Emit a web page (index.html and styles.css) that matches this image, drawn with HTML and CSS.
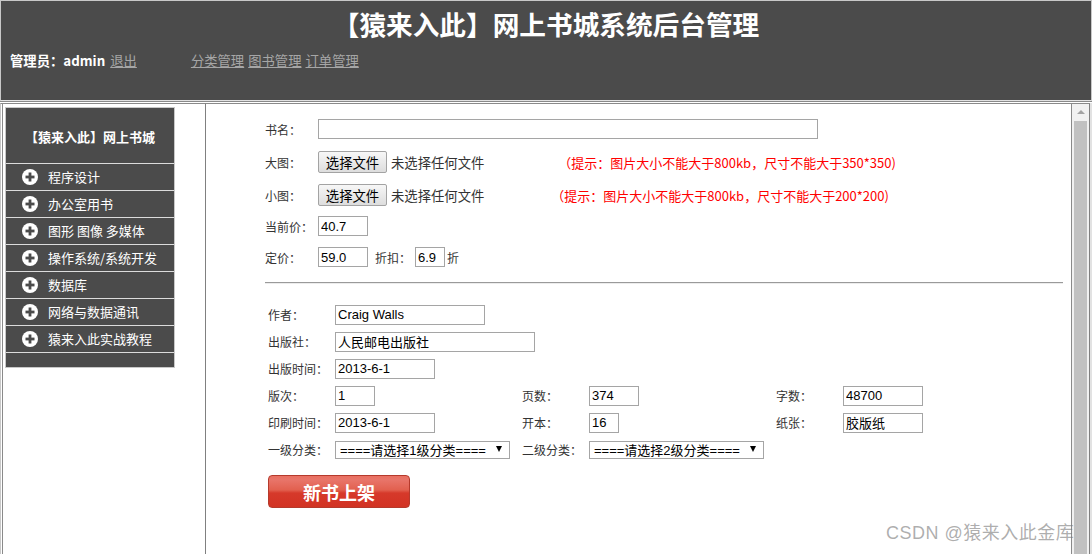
FILE: index.html
```html
<!DOCTYPE html>
<html lang="zh-CN">
<head>
<meta charset="utf-8">
<title>网上书城系统后台管理</title>
<link rel="stylesheet" href="styles.css">
</head>
<body>
<header class="top">
  <h1 class="title">【猿来入此】网上书城系统后台管理</h1>
  <div class="userbar">
    <span class="admin">管理员：admin</span><a class="logout" href="#">退出</a>
    <nav class="nav"><a href="#">分类管理</a><a href="#">图书管理</a><a href="#">订单管理</a></nav>
  </div>
</header>
<div class="frames">
  <aside class="left-frame">
    <div class="menu">
      <div class="menu-head">【猿来入此】网上书城</div>
      <div class="menu-item"><svg class="plus" viewBox="0 0 16 16"><circle cx="8" cy="8" r="8" fill="#fff"/><rect x="3.5" y="6.6" width="9" height="2.8" fill="#4b4b4b"/><rect x="6.6" y="3.5" width="2.8" height="9" fill="#4b4b4b"/></svg><span>程序设计</span></div>
      <div class="menu-item"><svg class="plus" viewBox="0 0 16 16"><circle cx="8" cy="8" r="8" fill="#fff"/><rect x="3.5" y="6.6" width="9" height="2.8" fill="#4b4b4b"/><rect x="6.6" y="3.5" width="2.8" height="9" fill="#4b4b4b"/></svg><span>办公室用书</span></div>
      <div class="menu-item"><svg class="plus" viewBox="0 0 16 16"><circle cx="8" cy="8" r="8" fill="#fff"/><rect x="3.5" y="6.6" width="9" height="2.8" fill="#4b4b4b"/><rect x="6.6" y="3.5" width="2.8" height="9" fill="#4b4b4b"/></svg><span>图形 图像 多媒体</span></div>
      <div class="menu-item"><svg class="plus" viewBox="0 0 16 16"><circle cx="8" cy="8" r="8" fill="#fff"/><rect x="3.5" y="6.6" width="9" height="2.8" fill="#4b4b4b"/><rect x="6.6" y="3.5" width="2.8" height="9" fill="#4b4b4b"/></svg><span>操作系统/系统开发</span></div>
      <div class="menu-item"><svg class="plus" viewBox="0 0 16 16"><circle cx="8" cy="8" r="8" fill="#fff"/><rect x="3.5" y="6.6" width="9" height="2.8" fill="#4b4b4b"/><rect x="6.6" y="3.5" width="2.8" height="9" fill="#4b4b4b"/></svg><span>数据库</span></div>
      <div class="menu-item"><svg class="plus" viewBox="0 0 16 16"><circle cx="8" cy="8" r="8" fill="#fff"/><rect x="3.5" y="6.6" width="9" height="2.8" fill="#4b4b4b"/><rect x="6.6" y="3.5" width="2.8" height="9" fill="#4b4b4b"/></svg><span>网络与数据通讯</span></div>
      <div class="menu-item"><svg class="plus" viewBox="0 0 16 16"><circle cx="8" cy="8" r="8" fill="#fff"/><rect x="3.5" y="6.6" width="9" height="2.8" fill="#4b4b4b"/><rect x="6.6" y="3.5" width="2.8" height="9" fill="#4b4b4b"/></svg><span>猿来入此实战教程</span></div>
      <div class="menu-foot"></div>
    </div>
  </aside>
  <section class="right-frame">
    <main class="main">
      <div class="row h30"><span class="lbl">书名：</span><input class="inp w500" value=""></div>
      <div class="row h36"><span class="lbl">大图：</span><button class="filebtn">选择文件</button><span class="filetext">未选择任何文件</span><span class="hint hint-big">（提示：图片大小不能大于800kb，尺寸不能大于350*350)</span></div>
      <div class="row h30"><span class="lbl">小图：</span><button class="filebtn">选择文件</button><span class="filetext">未选择任何文件</span><span class="hint hint-small">（提示：图片大小不能大于800kb，尺寸不能大于200*200)</span></div>
      <div class="row h32"><span class="lbl">当前价：</span><input class="inp w50" value="40.7"></div>
      <div class="row h30"><span class="lbl">定价：</span><input class="inp w50" value="59.0"><span class="lbl-inline">折扣：</span><input class="inp w30" value="6.9"><span class="unit">折</span></div>
      <hr class="divider">
      <div class="table2">
        <div class="row2"><span class="c-l">作者：</span><span class="c-f"><input class="inp w150" value="Craig Walls"></span></div>
        <div class="row2"><span class="c-l">出版社：</span><span class="c-f"><input class="inp w200" value="人民邮电出版社"></span></div>
        <div class="row2"><span class="c-l">出版时间：</span><span class="c-f"><input class="inp w100" value="2013-6-1"></span></div>
        <div class="row2"><span class="c-l">版次：</span><span class="c-f"><input class="inp w40" value="1"></span><span class="c-l">页数：</span><span class="c-f"><input class="inp w50" value="374"></span><span class="c-l">字数：</span><span class="c-f"><input class="inp w80" value="48700"></span></div>
        <div class="row2"><span class="c-l">印刷时间：</span><span class="c-f"><input class="inp w100" value="2013-6-1"></span><span class="c-l">开本：</span><span class="c-f"><input class="inp w30" value="16"></span><span class="c-l">纸张：</span><span class="c-f"><input class="inp w80" value="胶版纸"></span></div>
        <div class="row2"><span class="c-l">一级分类：</span><span class="c-f"><span class="select"><span>====请选择1级分类====</span><span class="caret"></span></span></span><span class="c-l">二级分类：</span><span class="c-f"><span class="select"><span>====请选择2级分类====</span><span class="caret"></span></span></span></div>
      </div>
      <button class="submit">新书上架</button>
    </main>
    <div class="scrollbar"><div class="arrow-up"></div><div class="thumb"></div></div>
  </section>
</div>
<div class="watermark">CSDN @猿来入此金库</div>
</body>
</html>
```
FILE: styles.css
```css
html, body { margin: 0; padding: 0; }
body {
  width: 1092px;
  height: 554px;
  overflow: hidden;
  background: #fff;
  font-family: "Noto Sans CJK SC", sans-serif;
  display: flex;
  flex-direction: column;
  position: relative;
}

/* top frame */
.top {
  flex: none;
  height: 101px;
  box-sizing: border-box;
  background: #4b4b4b;
  border: 1px solid #c8c8c8;
  border-bottom-color: #e2e2e2;
}
.title {
  margin: 5px 0 0;
  font-size: 26.67px;
  line-height: 36px;
  font-weight: bold;
  color: #fff;
  text-align: center;
}
.userbar {
  margin-top: 9px;
  padding-left: 9px;
  font-size: 13.33px;
  line-height: 20px;
  color: #fff;
  display: flex;
}
.admin { font-weight: bold; }
.logout { margin-left: 5px; color: #a6a6a6; }
.nav { margin-left: 54px; display: flex; gap: 4px; }
.nav a { color: #a6a6a6; }

/* frames */
.frames {
  flex: 1;
  min-height: 0;
  display: flex;
  border-top: 1px solid #8a8a8a;
  padding-top: 1px;
}
.left-frame {
  flex: none;
  width: 205px;
  box-sizing: border-box;
  border-top: 1px solid #8a8a8a;
  border-left: 1px solid #c8c8c8;
  box-shadow: inset 1px 0 #fff, inset 2px 0 #8a8a8a;
  padding: 3px 0 0 4px;
}
.menu {
  width: 170px;
  box-sizing: border-box;
  background: #4b4b4b;
  border: 1px solid #c8c8c8;
  color: #fff;
  font-size: 13px;
}
.menu-head {
  height: 55px;
  box-sizing: border-box;
  padding-top: 2px;
  line-height: 53px;
  text-align: center;
  font-weight: bold;
}
.menu-item {
  height: 27px;
  box-sizing: border-box;
  border-top: 1px solid #dcdcdc;
  padding-bottom: 1px;
  display: flex;
  align-items: center;
  padding-left: 16px;
}
.plus { width: 16px; height: 16px; margin-right: 10px; flex: none; }
.menu-foot { height: 15px; box-sizing: border-box; border-top: 1px solid #dcdcdc; }

.right-frame {
  flex: none;
  width: 885px;
  box-sizing: border-box;
  display: flex;
  border-top: 1px solid #8a8a8a;
  border-left: 1px solid #808080;
  border-right: 1px solid #808080;
  box-shadow: 2px 0 0 #e2e2e2;
}
.main {
  flex: 1;
  box-sizing: border-box;
  padding: 10px 8px 0 59px;
  font-size: 12px;
  color: #333;
}
.row { display: flex; align-items: center; }
.h30 { height: 30px; }
.h32 { height: 32px; }
.h36 { height: 36px; }
.lbl { width: 53px; flex: none; }

.inp {
  flex: none;
  box-sizing: border-box;
  height: 20px;
  margin: 0;
  border: 1px solid #a5a5a5;
  padding: 0 2px;
  font: 13px "Liberation Sans", "Noto Sans CJK SC", sans-serif;
  color: #000;
  background: #fff;
  outline: none;
}
.w30 { width: 30px; }
.w40 { width: 40px; }
.w50 { width: 50px; }
.w80 { width: 80px; }
.w100 { width: 100px; }
.w150 { width: 150px; }
.w200 { width: 200px; }
.w500 { width: 500px; }

.filebtn {
  width: 69px;
  height: 22px;
  padding: 0;
  margin: 0;
  border: 1px solid #a3a3a3;
  border-radius: 2px;
  background: linear-gradient(#f7f7f7, #dddddd);
  font: 13.33px "Noto Sans CJK SC", sans-serif;
  color: #000;
}
.filetext { margin-left: 4px; font-size: 13.33px; color: #333; }
.hint { color: #f00; font-size: 13px; white-space: nowrap; }
.hint-big { margin-left: 74px; }
.hint-small { margin-left: 67px; }
.lbl-inline { margin-left: 7px; margin-right: 4px; }
.unit { margin-left: 2px; }

.divider {
  margin: 10px 0 0 0;
  height: 0;
  border: 0;
  border-top: 1px solid #9a9a9a;
  border-bottom: 1px solid #ececec;
}

.table2 { margin: 17px 0 0 3px; }
.row2 { display: flex; align-items: center; height: 27px; }
.c-l { width: 67px; flex: none; }
.c-f { min-width: 187px; flex: none; display: flex; }
.select {
  box-sizing: border-box;
  width: 175px;
  height: 18px;
  border: 1px solid #a5a5a5;
  background: #fff;
  display: flex;
  align-items: center;
  justify-content: space-between;
  padding: 0 7px 0 4px;
  font: 13px "Liberation Sans", "Noto Sans CJK SC", sans-serif;
  color: #000;
  white-space: nowrap;
}
.caret {
  width: 0;
  height: 0;
  border-left: 3px solid transparent;
  border-right: 3px solid transparent;
  border-top: 6px solid #000;
  align-self: flex-start;
  margin-top: 4px;
}

.submit {
  display: block;
  margin: 12px 0 0 3px;
  width: 142px;
  height: 33px;
  padding: 0;
  border: 1px solid #b53a2c;
  border-radius: 4px;
  background: linear-gradient(#e96f60 0%, #e8756a 12%, #e2604f 45%, #d6392a 55%, #d23323 100%);
  color: #fff;
  font: bold 18px "Noto Sans CJK SC", sans-serif;
}

.scrollbar {
  flex: none;
  width: 17px;
  border-left: 1px solid #8a8a8a;
  background: #f1f1f1;
  display: flex;
  flex-direction: column;
}
.arrow-up {
  width: 0;
  height: 0;
  margin: 6px auto 0;
  border-left: 4px solid transparent;
  border-right: 4px solid transparent;
  border-bottom: 4px solid #a3a3a3;
}
.thumb {
  flex: 1;
  width: 13px;
  margin: 7px 0 0 2px;
  background: #c1c1c1;
}

.watermark {
  position: absolute;
  left: 886px;
  top: 523px;
  font: 18px/20px "Liberation Sans", "Noto Sans CJK SC", sans-serif;
  letter-spacing: 0.5px;
  color: rgba(120, 120, 120, 0.6);
  white-space: nowrap;
}
```
